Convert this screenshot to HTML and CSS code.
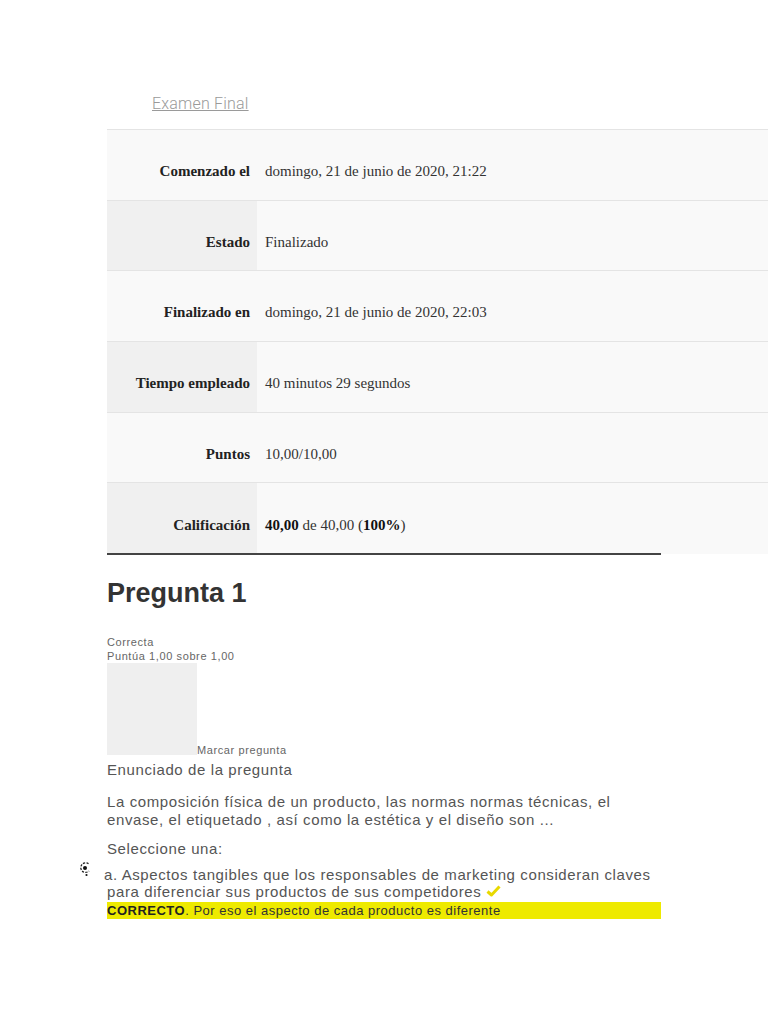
FILE: index.html
```html
<!DOCTYPE html>
<html lang="es">
<head>
<meta charset="utf-8">
<title>Examen Final</title>
<link rel="stylesheet" href="styles.css">
</head>
<body>
<div class="page">
  <nav class="crumb"><a href="#" class="crumb-link">Examen Final</a></nav>
  <table class="summary">
    <tbody>
      <tr class="row-odd"><th>Comenzado el</th><td>domingo, 21 de junio de 2020, 21:22</td></tr>
      <tr class="row-even"><th>Estado</th><td>Finalizado</td></tr>
      <tr class="row-odd"><th>Finalizado en</th><td>domingo, 21 de junio de 2020, 22:03</td></tr>
      <tr class="row-even"><th>Tiempo empleado</th><td>40 minutos 29 segundos</td></tr>
      <tr class="row-odd"><th>Puntos</th><td>10,00/10,00</td></tr>
      <tr class="row-even"><th>Calificación</th><td><b>40,00</b> de 40,00 (<b>100%</b>)</td></tr>
    </tbody>
  </table>
  <div class="rule"></div>
  <h2 class="q-title">Pregunta 1</h2>
  <div class="q-info">
    <div class="q-state">Correcta</div>
    <div class="q-grade">Puntúa 1,00 sobre 1,00</div>
    <div class="q-flag"><span class="flag-box"></span><span class="flag-text">Marcar pregunta</span></div>
  </div>
  <div class="q-content">
    <div class="q-label">Enunciado de la pregunta</div>
    <p class="q-text">La composición física de un producto, las normas normas técnicas, el envase, el etiquetado , así como la estética y el diseño son ...</p>
    <div class="q-prompt">Seleccione una:</div>
    <div class="answer">
      <svg class="radio" width="13" height="18" viewBox="0 0 13 18">
        <path d="M9.5 2.8 A4.8 4.8 0 1 0 10 10" fill="none" stroke="#222" stroke-width="1.3" stroke-dasharray="2.2 1.3"/>
        <circle cx="6" cy="7" r="2" fill="#111"/>
        <circle cx="7.5" cy="14" r="1.1" fill="#111"/>
      </svg>
      <div class="answer-text">a. Aspectos tangibles que los responsables de marketing consideran claves para diferenciar sus productos de sus competidores <svg class="check" width="15" height="12" viewBox="0 0 15 12"><path d="M1.5 6.5 L5.5 10 L13.5 1.5" fill="none" stroke="#e8d900" stroke-width="3" stroke-linejoin="round"/></svg></div>
    </div>
    <div class="feedback"><b>CORRECTO</b>. Por eso el aspecto de cada producto es diferente</div>
  </div>
</div>
</body>
</html>
```

FILE: styles.css
```css
html, body {
  margin: 0;
  padding: 0;
  background: #ffffff;
  overflow-x: hidden;
}

.page {
  width: 554px;
  margin-left: 107px;
  padding-top: 94px;
  font-family: "Liberation Sans", Arial, sans-serif;
  color: #333;
}

.crumb {
  padding-left: 45px;
  height: 35px;
}

.crumb-link {
  font-family: Roboto, "Liberation Sans", sans-serif;
  font-size: 16px;
  letter-spacing: 0.2px;
  color: #9a9a9a;
  text-decoration: underline;
  font-weight: 300;
}

.summary {
  width: 661px;
  border-collapse: collapse;
  font-family: "Liberation Serif", "Times New Roman", serif;
  font-size: 15px;
  color: #333;
}

.summary tr {
  height: 70.7px;
  border-top: 1px solid #e4e4e4;
}

.summary th {
  width: 143px;
  text-align: right;
  font-weight: bold;
  color: #222;
  padding: 13px 7px 0 0;
  vertical-align: middle;
}

.summary td {
  padding: 13px 0 0 8px;
  vertical-align: middle;
  color: #333;
}

.summary td b {
  color: #111;
}

.row-odd th, .row-odd td {
  background: #f9f9f9;
}

.row-even th {
  background: #f0f0f0;
}

.row-even td {
  background: #f9f9f9;
}

.rule {
  height: 2px;
  background: #444;
  margin-top: -1px;
}

.q-title {
  margin: 21px 0 0 0;
  font-size: 27px;
  font-weight: bold;
  color: #333;
  line-height: 34px;
}

.q-info {
  margin-top: 25px;
  font-size: 11px;
  color: #666;
  letter-spacing: 0.6px;
  line-height: 14px;
}

.q-flag {
  display: flex;
  align-items: flex-end;
}

.flag-box {
  display: block;
  width: 90px;
  height: 92px;
  background: #efefef;
}

.flag-text {
  line-height: 12px;
  margin-bottom: -1px;
}

.q-content {
  color: #555;
  font-size: 15px;
  letter-spacing: 0.6px;
}

.q-label {
  line-height: 20px;
  margin-top: 5px;
}

.q-text {
  margin: 13px 0 0 0;
  line-height: 18px;
}

.q-prompt {
  margin-top: 11px;
  line-height: 18px;
}

.answer {
  display: flex;
  position: relative;
  margin-top: 8px;
  line-height: 17px;
}

.radio {
  position: absolute;
  left: -28px;
  top: -5px;
}

.answer-text {
  text-indent: -3px;
}

.check {
  vertical-align: 0px;
}

.feedback {
  background: #eeea00;
  color: #333;
  font-size: 13px;
  line-height: 17px;
  letter-spacing: 0.5px;
  margin-top: 2px;
}

.feedback b {
  color: #222;
  font-size: 13px;
}
```
